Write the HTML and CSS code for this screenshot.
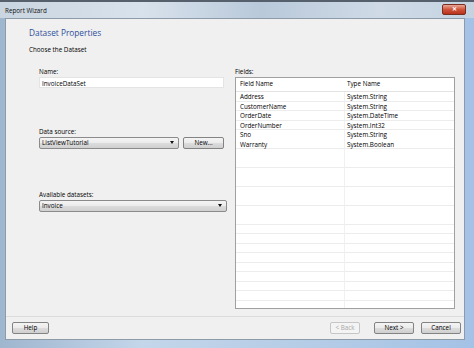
FILE: index.html
```html
<!DOCTYPE html>
<html lang="en">
<head>
  <meta charset="UTF-8" />
  <title>Report Wizard</title>
  <link rel="stylesheet" href="styles.css">
</head>
<body>
  <div class="window">
    <div class="titlebar">
      <span class="title">Report Wizard</span>
      <div class="close">&#x2715;</div>
    </div>

    <div class="frame">
      <div class="client">
        <div class="header">
          <h1>Dataset Properties</h1>
          <p>Choose the Dataset</p>
        </div>

        <div class="body">
          <div class="left">
            <label class="lbl lbl-name">Name:</label>
            <div class="textbox">InvoiceDataSet</div>

            <label class="lbl lbl-source">Data source:</label>
            <div class="row">
              <div class="combo combo-source">ListViewTutorial<span class="arrow"></span></div>
              <button class="btn btn-new">New...</button>
            </div>

            <label class="lbl lbl-avail">Available datasets:</label>
            <div class="combo">Invoice<span class="arrow"></span></div>
          </div>

          <div class="right">
            <label class="lbl lbl-fields">Fields:</label>
            <div class="fields">
              <div class="fhead">
                <span class="c1">Field Name</span>
                <span class="c2">Type Name</span>
              </div>
              <div class="frows">
                <div class="frow"><span class="c1">Address</span><span class="c2">System.String</span></div>
                <div class="frow"><span class="c1">CustomerName</span><span class="c2">System.String</span></div>
                <div class="frow"><span class="c1">OrderDate</span><span class="c2">System.DateTime</span></div>
                <div class="frow"><span class="c1">OrderNumber</span><span class="c2">System.Int32</span></div>
                <div class="frow"><span class="c1">Sno</span><span class="c2">System.String</span></div>
                <div class="frow"><span class="c1">Warranty</span><span class="c2">System.Boolean</span></div>
              </div>
            </div>
          </div>
        </div>

        <div class="footer">
          <button class="btn btn-help">Help</button>
          <div class="nav">
            <button class="btn btn-back" disabled>&lt; Back</button>
            <button class="btn btn-next">Next &gt;</button>
            <button class="btn btn-cancel">Cancel</button>
          </div>
        </div>
      </div>
    </div>
  </div>
</body>
</html>
```

FILE: styles.css
```css
body {
  margin: 0;
  font-family: "Open Sans", "Noto Sans", sans-serif;
  font-size: 6.3px;
  color: #000;
}
.window {
  width: 474px;
  height: 348px;
  display: flex;
  flex-direction: column;
  background: linear-gradient(90deg, #9fb6cf 0%, #c3d6ea 30%, #b3cbe6 70%, #a4c2e6 100%);
  overflow: hidden;
}
.titlebar {
  height: 18px;
  display: flex;
  align-items: center;
  justify-content: space-between;
  padding: 0 8px 0 5px;
  border-top: 2px solid #55606c;
  box-sizing: border-box;
  background: linear-gradient(90deg, #c9d5e0 0%, #d8e2ec 30%, #b9c9da 55%, #cfdae6 80%, #c5d3e1 100%);
}
.title {
  font-size: 6.3px;
  color: #111;
  margin-top: 1px;
}
.close {
  width: 22px;
  height: 9px;
  margin-top: -2px;
  border: 1px solid #7a2e22;
  border-radius: 2px;
  background: linear-gradient(#e9a897 0%, #d0533a 50%, #b8321c 100%);
  color: #fff;
  font-size: 6px;
  line-height: 9px;
  text-align: center;
  font-weight: bold;
}
.frame {
  flex: 1;
  padding: 0 9px 8px 5px;
  display: flex;
}
.client {
  flex: 1;
  background: #f0f0f0;
  border: 1px solid #8d9aa8;
  display: flex;
  flex-direction: column;
}
.header {
  height: 45px;
  padding-left: 23px;
  box-sizing: border-box;
}
.header h1 {
  margin: 8px 0 0;
  font-size: 8.3px;
  font-weight: normal;
  color: #2e4d9c;
  line-height: 12px;
}
.header p {
  margin: 7px 0 0;
  line-height: 8px;
}
.body {
  flex: 1;
  display: flex;
  gap: 8px;
  padding-left: 33px;
}
.left {
  width: 188px;
  display: flex;
  flex-direction: column;
}
.right {
  width: 220px;
  display: flex;
  flex-direction: column;
}
.lbl {
  display: block;
  line-height: 9px;
  height: 9px;
}
.lbl-name { margin-top: 3px; }
.lbl-fields { margin-top: 3px; }
.lbl-source { margin-top: 39px; }
.lbl-avail { margin-top: 41px; }
.textbox {
  margin-top: 1px;
  width: 185px;
  height: 11px;
  line-height: 11px;
  background: #fff;
  border: 1px solid #e4e4e4;
  box-sizing: border-box;
  padding-left: 2px;
}
.row {
  display: flex;
  gap: 4px;
}
.combo {
  position: relative;
  margin-top: 1px;
  height: 12px;
  line-height: 10px;
  border: 1px solid #8b8b8b;
  border-radius: 2px;
  box-sizing: border-box;
  padding-left: 2px;
  background: linear-gradient(#f4f4f4 0%, #ebebeb 50%, #dcdcdc 51%, #d0d0d0 100%);
}
.combo-source {
  width: 140px;
}
.arrow {
  position: absolute;
  right: 4px;
  top: 3px;
  border-left: 2.5px solid transparent;
  border-right: 2.5px solid transparent;
  border-top: 3px solid #111;
}
.btn {
  font-family: inherit;
  font-size: 6.3px;
  color: #000;
  height: 12px;
  padding: 0;
  border: 1px solid #838383;
  border-radius: 2px;
  background: linear-gradient(#f4f4f4 0%, #ebebeb 50%, #dddddd 51%, #cfcfcf 100%);
  line-height: 10px;
}
.btn-new {
  width: 41px;
  margin-top: 1px;
}
.fields {
  margin-top: 1px;
  height: 232px;
  background: #fff;
  border: 1px solid #a0a0a0;
  box-sizing: border-box;
  display: flex;
  flex-direction: column;
}
.fhead {
  display: flex;
  height: 14px;
  line-height: 12px;
  border-bottom: 1px solid #e3e3e3;
  box-sizing: border-box;
}
.frows {
  flex: 1;
  background:
    linear-gradient(90deg, transparent 108px, #f0f0f0 108px, #f0f0f0 109px, transparent 109px),
    repeating-linear-gradient(transparent 0, transparent 8.5px, #ececec 8.5px, #ececec 9.5px);
}
.frow {
  display: flex;
  height: 9.5px;
  line-height: 9.5px;
}
.c1 {
  width: 104px;
  padding-left: 4px;
}
.c2 {
  padding-left: 3px;
}
.footer {
  height: 23px;
  border-top: 1px solid #dcdcdc;
  box-sizing: border-box;
  display: flex;
  align-items: center;
  justify-content: space-between;
  padding: 0 3px 0 6px;
}
.nav {
  display: flex;
  gap: 7px;
}
.btn-help { width: 37px; }
.btn-back {
  width: 30px;
  color: #a8a8a8;
  border-color: #c6c6c6;
  background: #f4f4f4;
  margin-right: 7px;
}
.btn-next { width: 40px; }
.btn-cancel { width: 40px; }
```
